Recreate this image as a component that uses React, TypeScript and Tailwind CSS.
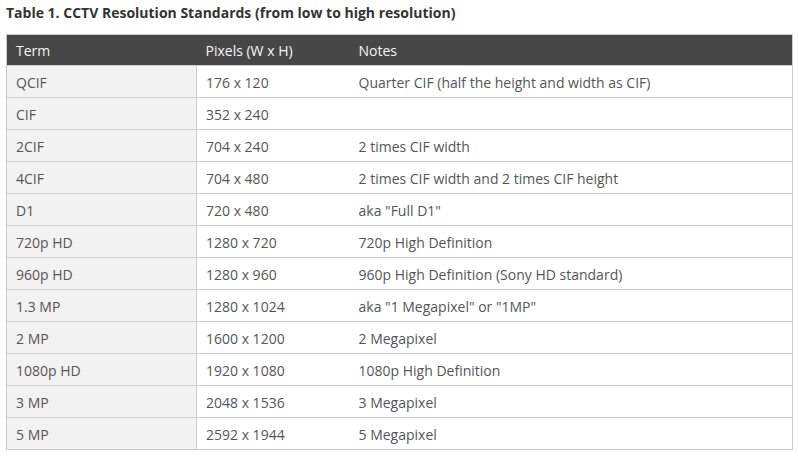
const rows: [string, string, string][] = [
  ['QCIF', '176 x 120', 'Quarter CIF (half the height and width as CIF)'],
  ['CIF', '352 x 240', ''],
  ['2CIF', '704 x 240', '2 times CIF width'],
  ['4CIF', '704 x 480', '2 times CIF width and 2 times CIF height'],
  ['D1', '720 x 480', 'aka "Full D1"'],
  ['720p HD', '1280 x 720', '720p High Definition'],
  ['960p HD', '1280 x 960', '960p High Definition (Sony HD standard)'],
  ['1.3 MP', '1280 x 1024', 'aka "1 Megapixel" or "1MP"'],
  ['2 MP', '1600 x 1200', '2 Megapixel'],
  ['1080p HD', '1920 x 1080', '1080p High Definition'],
  ['3 MP', '2048 x 1536', '3 Megapixel'],
  ['5 MP', '2592 x 1944', '5 Megapixel'],
];

export default function App() {
  return (
    <div className="bg-white w-[798px] h-[456px] px-[6px] pt-[3px] font-['Open_Sans',sans-serif] text-[#555]">
      <h3 className="text-[14px] leading-[19px] font-bold text-[#333] mb-[12px]">
        Table 1. CCTV Resolution Standards (from low to high resolution)
      </h3>
      <table className="w-[787px] border-collapse border border-[#cccccc] text-[14px] table-fixed">
        <colgroup>
          <col className="w-[190px]" />
          <col className="w-[153px]" />
          <col />
        </colgroup>
        <thead>
          <tr className="bg-[#474747] text-[#f5f5f5] h-[31px]">
            <th className="font-normal text-left pl-[9px] pt-[1px] pb-0">Term</th>
            <th className="font-normal text-left pl-[9px] pt-[1px] pb-0">Pixels (W x H)</th>
            <th className="font-normal text-left pl-[9px] pt-[1px] pb-0">Notes</th>
          </tr>
        </thead>
        <tbody>
          {rows.map(([term, px, note]) => (
            <tr key={term} className="h-[32px] border-t border-[#cccccc]">
              <td className="bg-[#f2f2f2] border-r border-[#cccccc] pl-[9px] pt-[1px] pb-0">{term}</td>
              <td className="pl-[9px] pt-[1px] pb-0">{px}</td>
              <td className="pl-[9px] pt-[1px] pb-0">{note}</td>
            </tr>
          ))}
        </tbody>
      </table>
    </div>
  );
}
